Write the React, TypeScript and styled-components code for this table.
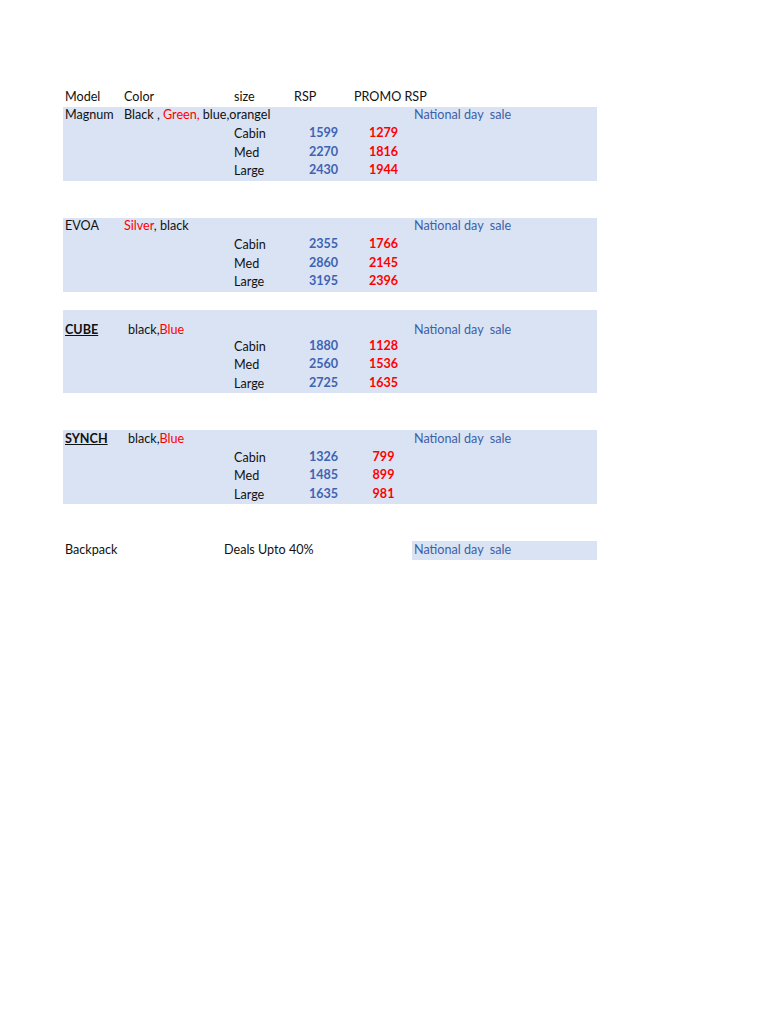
import styled, { createGlobalStyle } from 'styled-components'

const GlobalStyle = createGlobalStyle`
  html, body {
    margin: 0;
    padding: 0;
    background: #fff;
  }
  body {
    font-family: 'Lato', 'Liberation Sans', sans-serif;
    font-size: 12.6px;
    color: #111;
  }
`

const Sheet = styled.div`
  display: flex;
  flex-direction: column;
  width: 534px;
  padding: 88px 0 0 63px;
`

const Cell = styled.div<{ $indent?: number }>`
  padding: 0 0 2px ${({ $indent }) => $indent ?? 2}px;
  white-space: pre;
  line-height: 16px;
  overflow: visible;
`

const Row = styled.div<{ $height?: number }>`
  display: grid;
  grid-template-columns: 59px 110px 60px 60px 60px 185px;
  height: ${({ $height }) => $height ?? 18.5}px;
  align-items: end;
`

// the taller first row of a block sits its text a little lower in the cell
const TallRow = styled(Row)`
  margin-bottom: -2px;
  padding-top: 2px;
`

const Band = styled.div<{ $gap: number }>`
  display: flex;
  flex-direction: column;
  background: #dae3f3;
  margin-top: ${({ $gap }) => $gap}px;
`

const BackpackRow = styled(Row)`
  margin-top: 37px;
`

const Price = styled.div<{ $promo?: boolean }>`
  text-align: center;
  font-weight: 700;
  line-height: 16px;
  padding: 0 0 3px 3px;
  color: ${({ $promo }) => ($promo ? '#ff0000' : '#3d64b4')};
`

const Sale = styled.div<{ $tinted?: boolean }>`
  align-self: stretch;
  display: flex;
  align-items: flex-end;
  padding: 0 0 2px 2px;
  line-height: 16px;
  white-space: pre;
  color: #3d5fa8;
  background: ${({ $tinted }) => ($tinted ? '#dae3f3' : 'transparent')};
`

const Red = styled.span`
  color: #ff0000;
`

const ModelTag = styled.span`
  font-weight: 700;
  text-decoration: underline;
`

type Size = { name: string; rsp: number; promo: number }
type Model = {
  name: string
  color: React.ReactNode
  strong?: boolean
  tall?: boolean
  gapBefore: number
  sizes: Size[]
}

const models: Model[] = [
  {
    name: 'Magnum',
    color: (
      <>
        Black , <Red>Green,</Red> blue,orangel
      </>
    ),
    gapBefore: 0,
    sizes: [
      { name: 'Cabin', rsp: 1599, promo: 1279 },
      { name: 'Med', rsp: 2270, promo: 1816 },
      { name: 'Large', rsp: 2430, promo: 1944 }
    ]
  },
  {
    name: 'EVOA',
    color: (
      <>
        <Red>Silver</Red>, black
      </>
    ),
    gapBefore: 37,
    sizes: [
      { name: 'Cabin', rsp: 2355, promo: 1766 },
      { name: 'Med', rsp: 2860, promo: 2145 },
      { name: 'Large', rsp: 3195, promo: 2396 }
    ]
  },
  {
    name: 'CUBE',
    strong: true,
    tall: true,
    color: (
      <>
        black,<Red>Blue</Red>
      </>
    ),
    gapBefore: 18,
    sizes: [
      { name: 'Cabin', rsp: 1880, promo: 1128 },
      { name: 'Med', rsp: 2560, promo: 1536 },
      { name: 'Large', rsp: 2725, promo: 1635 }
    ]
  },
  {
    name: 'SYNCH',
    strong: true,
    color: (
      <>
        black,<Red>Blue</Red>
      </>
    ),
    gapBefore: 37,
    sizes: [
      { name: 'Cabin', rsp: 1326, promo: 799 },
      { name: 'Med', rsp: 1485, promo: 899 },
      { name: 'Large', rsp: 1635, promo: 981 }
    ]
  }
]

function App() {
  return (
    <>
      <GlobalStyle />
      <Sheet>
        <Row>
          <Cell>Model</Cell>
          <Cell>Color</Cell>
          <Cell>size</Cell>
          <Cell>RSP</Cell>
          <Cell>PROMO RSP</Cell>
          <Cell />
        </Row>
        {models.map((m) => {
          const FirstRow = m.tall ? TallRow : Row
          return (
            <Band key={m.name} $gap={m.gapBefore}>
              <FirstRow $height={m.tall ? 28 : undefined}>
                <Cell>{m.strong ? <ModelTag>{m.name}</ModelTag> : m.name}</Cell>
                <Cell $indent={m.strong ? 6 : 2}>{m.color}</Cell>
                <Cell />
                <Cell />
                <Cell />
                <Sale>National day  sale</Sale>
              </FirstRow>
              {m.sizes.map((s) => (
                <Row key={s.name}>
                  <Cell />
                  <Cell />
                  <Cell>{s.name}</Cell>
                  <Price>{s.rsp}</Price>
                  <Price $promo>{s.promo}</Price>
                  <Cell />
                </Row>
              ))}
            </Band>
          )
        })}
        <BackpackRow>
          <Cell>Backpack</Cell>
          <Cell $indent={102}>Deals Upto 40%</Cell>
          <Cell />
          <Cell />
          <Cell />
          <Sale $tinted>National day  sale</Sale>
        </BackpackRow>
      </Sheet>
    </>
  )
}

export default App
